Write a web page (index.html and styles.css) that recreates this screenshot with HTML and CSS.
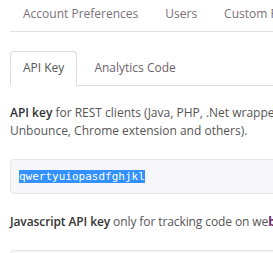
FILE: index.html
```html
<!DOCTYPE html>
<html lang="en">
<head>
    <meta charset="UTF-8">
    <meta name="viewport" content="width=device-width, initial-scale=1.0">
    <title>Settings - API</title>
    <link rel="stylesheet" href="styles.css">
</head>
<body>
    <div class="page">
        <ul class="top-nav">
            <li>Account Preferences</li>
            <li>Users</li>
            <li>Custom Fields</li>
        </ul>

        <ul class="tabs">
            <li class="active">API Key</li>
            <li>Analytics Code</li>
        </ul>

        <div class="tab-content">
            <p><strong>API key</strong> for REST clients (Java, PHP, .Net wrappers, Zapier,<br>Unbounce, Chrome extension and others).</p>
            <pre class="key"><span class="selected">qwertyuiopasdfghjkl</span></pre>

            <p class="js"><strong>Javascript API key</strong> only for tracking code on we<b class="mark">b</b>site.</p>
            <pre class="key"></pre>
        </div>
    </div>
</body>
</html>
```

FILE: styles.css
```css
body {
    margin: 0;
    font-family: 'Open Sans', sans-serif;
    font-size: 12px;
    color: #555;
    overflow: hidden;
}

.page {
    padding-left: 10px;
    width: 600px;
}

.top-nav {
    list-style: none;
    margin: 0;
    padding: 0 0 0 13px;
    height: 31px;
    display: flex;
    gap: 27px;
    border-bottom: 1px solid #e3e0e3;
}

.top-nav li {
    color: #7a7079;
    line-height: 28px;
    white-space: nowrap;
}

.tabs {
    list-style: none;
    margin: 19px 0 0;
    padding: 0;
    display: flex;
    border-bottom: 1px solid #ddd;
}

.tabs li {
    padding: 0 12px;
    height: 33px;
    line-height: 32px;
    color: #6e5f6c;
    margin-bottom: -1px;
    border: 1px solid transparent;
    border-radius: 4px 4px 0 0;
}

.tabs li.active {
    border-color: #ddd;
    border-bottom-color: #fff;
    background: #fff;
    color: #555;
    margin-right: 4px;
}

.tab-content p {
    margin: 18px 0 0;
    line-height: 18px;
    white-space: nowrap;
}

.tab-content strong {
    color: #333;
    font-weight: 600;
}

.key {
    margin: 19px 0 0;
    height: 35px;
    box-sizing: border-box;
    padding: 10px 8px;
    background: #f7f7f9;
    border: 1px solid #e4e4e8;
    border-radius: 4px;
    font-family: 'DejaVu Sans Mono', monospace;
    font-size: 11px;
    line-height: 14px;
}

.selected {
    background: #3390ff;
    color: #fff;
}

.tab-content p.js {
    margin-top: 19px;
    letter-spacing: -0.1px;
}

.mark {
    color: #6b2d6b;
}
```
